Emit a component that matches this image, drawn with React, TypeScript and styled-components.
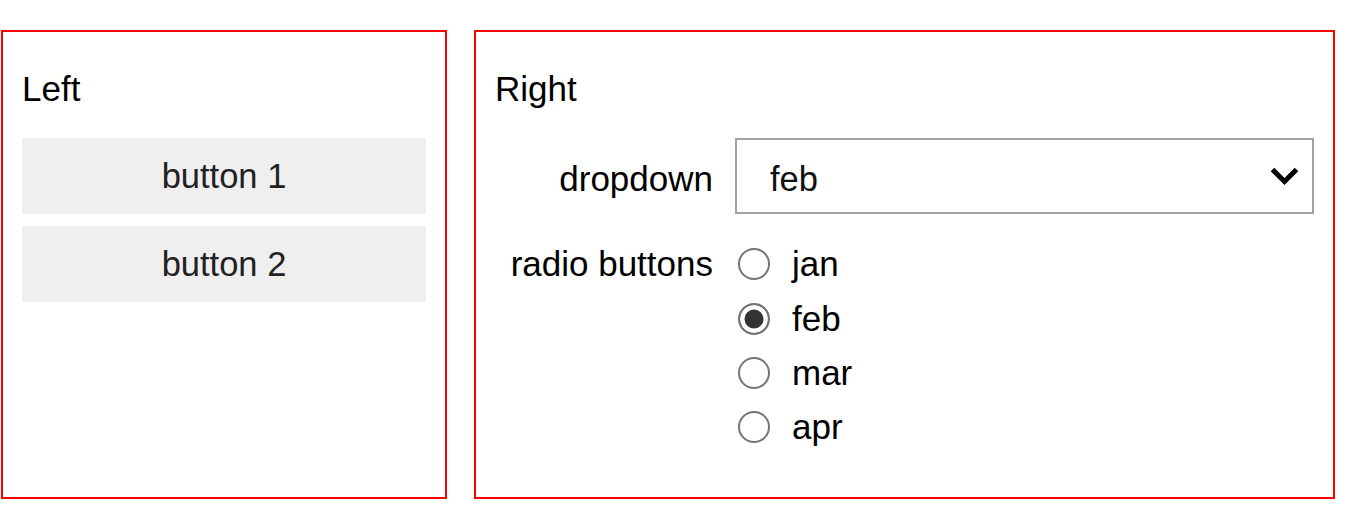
import React, { useState } from "react";
import styled, { createGlobalStyle } from "styled-components";

const GlobalStyle = createGlobalStyle`
  body {
    margin: 0;
    background: #fff;
    font-family: "Liberation Sans", Arial, sans-serif;
    color: #000;
  }
`;

const Page = styled.div`
  display: flex;
  align-items: stretch;
  gap: 27px;
  padding: 30px 0 0 1px;
`;

const Panel = styled.section<{ $width: number }>`
  box-sizing: border-box;
  width: ${(p) => p.$width}px;
  border: 2px solid #ff0000;
  padding: 20px 19px 42px;
`;

const Heading = styled.h2`
  margin: 17px 0 29px;
  font-size: 35px;
  font-weight: 400;
  line-height: 40px;
`;

const ButtonStack = styled.div`
  display: flex;
  flex-direction: column;
  gap: 12px;
`;

const Button = styled.button`
  height: 76px;
  border: none;
  background: #efefef;
  color: #222;
  font-family: inherit;
  font-size: 34.5px;
  cursor: pointer;
`;

const Form = styled.div`
  display: grid;
  grid-template-columns: 218px 1fr;
  column-gap: 22px;
  row-gap: 23px;
`;

const Label = styled.label<{ $top?: boolean }>`
  font-size: 35px;
  text-align: right;
  align-self: ${(p) => (p.$top ? "start" : "center")};
  line-height: ${(p) => (p.$top ? "54.4px" : "40px")};
  padding: ${(p) => (p.$top ? "0" : "5px 0 0")};
`;

const SelectWrap = styled.div`
  position: relative;
  height: 76px;
`;

const Select = styled.select`
  box-sizing: border-box;
  width: 100%;
  height: 100%;
  appearance: none;
  border: 2px solid #a0a0a0;
  border-radius: 0;
  background: #fff;
  padding: 5px 0 0 33px;
  font-family: inherit;
  font-size: 34.5px;
  color: #111;
  outline: none;
`;

const Chevron = styled.svg`
  position: absolute;
  right: 15px;
  top: 29px;
  pointer-events: none;
`;

const RadioGroup = styled.div`
  display: flex;
  flex-direction: column;
`;

const Option = styled.label`
  display: flex;
  align-items: center;
  gap: 22px;
  height: 54.4px;
  font-size: 35px;
`;

const Radio = styled.input`
  appearance: none;
  box-sizing: border-box;
  width: 32px;
  height: 32px;
  margin: 0 0 0 3px;
  border: 2.5px solid #747474;
  border-radius: 50%;
  background: #fff;

  &:checked {
    background: #333;
    box-shadow: inset 0 0 0 4.5px #fff;
  }
`;

const months = ["jan", "feb", "mar", "apr"];

export default function App() {
  const [month, setMonth] = useState("feb");
  const [picked, setPicked] = useState("feb");

  return (
    <>
      <GlobalStyle />
      <Page>
        <Panel $width={446}>
          <Heading>Left</Heading>
          <ButtonStack>
            <Button>button 1</Button>
            <Button>button 2</Button>
          </ButtonStack>
        </Panel>

        <Panel $width={861}>
          <Heading>Right</Heading>
          <Form>
            <Label htmlFor="month-select">dropdown</Label>
            <SelectWrap>
              <Select
                id="month-select"
                value={month}
                onChange={(e) => setMonth(e.target.value)}
              >
                {months.map((m) => (
                  <option key={m} value={m}>
                    {m}
                  </option>
                ))}
              </Select>
              <Chevron width="29" height="19" viewBox="0 0 29 19">
                <path
                  d="M2.5 2.5 L14.5 14.5 L26.5 2.5"
                  fill="none"
                  stroke="#000"
                  strokeWidth="5"
                />
              </Chevron>
            </SelectWrap>

            <Label $top>radio buttons</Label>
            <RadioGroup>
              {months.map((m) => (
                <Option key={m}>
                  <Radio
                    type="radio"
                    name="month"
                    value={m}
                    checked={picked === m}
                    onChange={() => setPicked(m)}
                  />
                  {m}
                </Option>
              ))}
            </RadioGroup>
          </Form>
        </Panel>
      </Page>
    </>
  );
}
